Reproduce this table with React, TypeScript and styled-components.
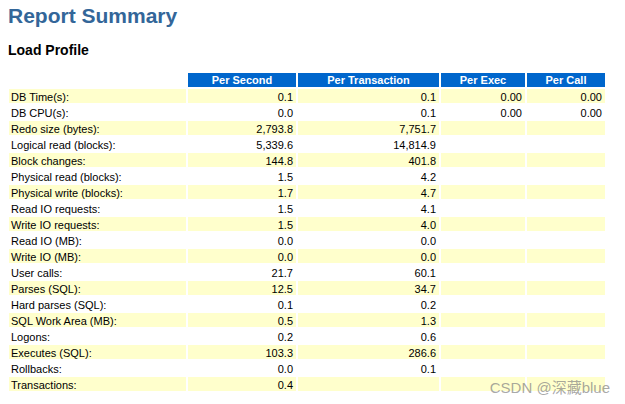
import React from 'react';
import styled, { createGlobalStyle } from 'styled-components';

const GlobalStyle = createGlobalStyle`
  html, body {
    margin: 0;
    padding: 0;
    background: #ffffff;
  }
  body {
    font-family: "Liberation Sans", Arial, Helvetica, sans-serif;
    color: #000000;
  }
`;

const Page = styled.div`
  position: relative;
  width: 625px;
  height: 404px;
  padding: 4px 8px 0 8px;
  box-sizing: border-box;
  overflow: hidden;
`;

const Title = styled.h1`
  margin: 0;
  font-size: 21px;
  line-height: 24px;
  font-weight: bold;
  color: #336699;
`;

const Subtitle = styled.h2`
  margin: 14px 0 0 0;
  font-size: 14px;
  line-height: 16px;
  font-weight: bold;
  color: #000000;
`;

const Table = styled.table`
  margin: 13px 0 0 -1px;
  border-collapse: separate;
  border-spacing: 2px;
  table-layout: fixed;
  width: 600px;
`;

const HeadCell = styled.th<{ $blank?: boolean }>`
  height: 14px;
  padding: 2px 3px 1px;
  box-sizing: border-box;
  font-size: 11px;
  line-height: 11px;
  font-weight: bold;
  text-align: center;
  color: #ffffff;
  background: ${p => (p.$blank ? 'transparent' : '#0066cc')};
  white-space: nowrap;
`;

const Cell = styled.td<{ $shade: boolean; $num?: boolean }>`
  height: 14px;
  padding: 3px 3px 0 2px;
  box-sizing: border-box;
  font-size: 11px;
  line-height: 11px;
  text-align: ${p => (p.$num ? 'right' : 'left')};
  background: ${p => (p.$shade ? '#ffffcc' : '#ffffff')};
  white-space: nowrap;
  overflow: hidden;
`;

const Watermark = styled.div`
  position: absolute;
  right: 15px;
  bottom: 8px;
  font-family: "Liberation Sans", "Noto Sans CJK SC", sans-serif;
  font-size: 15px;
  line-height: 17px;
  color: rgba(130, 130, 130, 0.7);
  pointer-events: none;
`;

type Row = [string, string, string, string, string];

const rows: Row[] = [
  ['DB Time(s):', '0.1', '0.1', '0.00', '0.00'],
  ['DB CPU(s):', '0.0', '0.1', '0.00', '0.00'],
  ['Redo size (bytes):', '2,793.8', '7,751.7', '', ''],
  ['Logical read (blocks):', '5,339.6', '14,814.9', '', ''],
  ['Block changes:', '144.8', '401.8', '', ''],
  ['Physical read (blocks):', '1.5', '4.2', '', ''],
  ['Physical write (blocks):', '1.7', '4.7', '', ''],
  ['Read IO requests:', '1.5', '4.1', '', ''],
  ['Write IO requests:', '1.5', '4.0', '', ''],
  ['Read IO (MB):', '0.0', '0.0', '', ''],
  ['Write IO (MB):', '0.0', '0.0', '', ''],
  ['User calls:', '21.7', '60.1', '', ''],
  ['Parses (SQL):', '12.5', '34.7', '', ''],
  ['Hard parses (SQL):', '0.1', '0.2', '', ''],
  ['SQL Work Area (MB):', '0.5', '1.3', '', ''],
  ['Logons:', '0.2', '0.6', '', ''],
  ['Executes (SQL):', '103.3', '286.6', '', ''],
  ['Rollbacks:', '0.0', '0.1', '', ''],
  ['Transactions:', '0.4', '', '', ''],
];

const columns = ['Per Second', 'Per Transaction', 'Per Exec', 'Per Call'];

const App: React.FC = () => {
  return (
    <Page>
      <GlobalStyle />
      <Title>Report Summary</Title>
      <Subtitle>Load Profile</Subtitle>
      <Table>
        <colgroup>
          <col style={{ width: 177 }} />
          <col style={{ width: 108 }} />
          <col style={{ width: 141 }} />
          <col style={{ width: 84 }} />
          <col style={{ width: 78 }} />
        </colgroup>
        <thead>
          <tr>
            <HeadCell $blank />
            {columns.map(c => (
              <HeadCell key={c}>{c}</HeadCell>
            ))}
          </tr>
        </thead>
        <tbody>
          {rows.map((r, i) => {
            const shade = i % 2 === 0;
            return (
              <tr key={r[0]}>
                <Cell $shade={shade}>{r[0]}</Cell>
                <Cell $shade={shade} $num>{r[1]}</Cell>
                <Cell $shade={shade} $num>{r[2]}</Cell>
                <Cell $shade={shade} $num>{r[3]}</Cell>
                <Cell $shade={shade} $num>{r[4]}</Cell>
              </tr>
            );
          })}
        </tbody>
      </Table>
      <Watermark>CSDN @深藏blue</Watermark>
    </Page>
  );
};

export default App;
